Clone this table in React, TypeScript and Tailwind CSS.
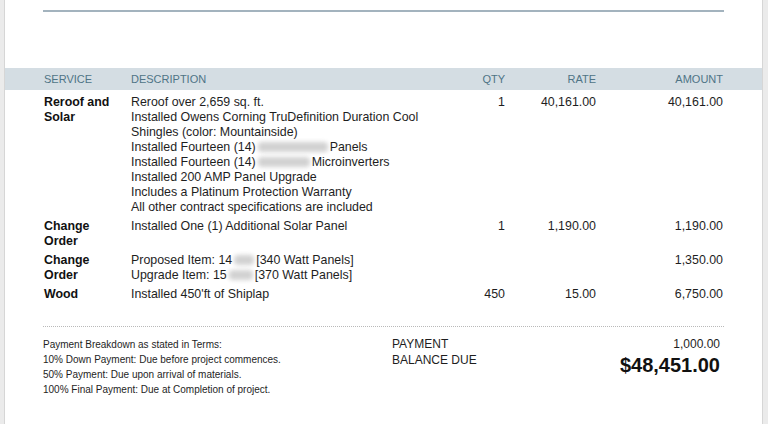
import React from "react";

interface LineItem {
  service: string[];
  description: React.ReactNode[];
  qty?: string;
  rate?: string;
  amount: string;
}

// redacted part of a line, shown as a soft grey smudge
const Smudge: React.FC<{ w: string }> = ({ w }) => (
  <span
    className={`mx-[2px] inline-block h-[10px] rounded-sm bg-[#d2d2d2] align-[-1px] blur-[2px] ${w}`}
  />
);

const items: LineItem[] = [
  {
    service: ["Reroof and", "Solar"],
    description: [
      "Reroof over 2,659 sq. ft.",
      "Installed Owens Corning TruDefinition Duration Cool",
      "Shingles (color: Mountainside)",
      <>
        Installed Fourteen (14)
        <Smudge w="w-[70px]" />
        Panels
      </>,
      <>
        Installed Fourteen (14)
        <Smudge w="w-[52px]" />
        Microinverters
      </>,
      "Installed 200 AMP Panel Upgrade",
      "Includes a Platinum Protection Warranty",
      "All other contract specifications are included",
    ],
    qty: "1",
    rate: "40,161.00",
    amount: "40,161.00",
  },
  {
    service: ["Change", "Order"],
    description: ["Installed One (1) Additional Solar Panel"],
    qty: "1",
    rate: "1,190.00",
    amount: "1,190.00",
  },
  {
    service: ["Change", "Order"],
    description: [
      <>
        Proposed Item: 14
        <Smudge w="w-[20px]" />
        [340 Watt Panels]
      </>,
      <>
        Upgrade Item: 15
        <Smudge w="w-[24px]" />
        [370 Watt Panels]
      </>,
    ],
    amount: "1,350.00",
  },
  {
    service: ["Wood"],
    description: ["Installed 450'ft of Shiplap"],
    qty: "450",
    rate: "15.00",
    amount: "6,750.00",
  },
];

const cols = "grid grid-cols-[87px_1fr_60px_91px_127px]";

export default function App() {
  return (
    <div className="flex h-[424px] w-[768px] overflow-hidden bg-[#ebebeb] font-['Liberation_Sans',Arial,sans-serif] text-[#1e1e1e]">
      <div className="ml-[4px] flex w-[759px] flex-col border-x border-[#d6d6d6] bg-white">
        {/* top rule */}
        <div className="px-[38px] pt-[10px]">
          <div className="h-[2px] bg-[#a3b3be]" />
        </div>

        {/* table header */}
        <div
          className={`${cols} mt-[56px] h-[22px] items-center bg-[#d4dde3] pl-[39px] pr-[39px] text-[11px] text-[#4f7486]`}
        >
          <span>SERVICE</span>
          <span>DESCRIPTION</span>
          <span className="text-right">QTY</span>
          <span className="text-right">RATE</span>
          <span className="text-right">AMOUNT</span>
        </div>

        {/* rows */}
        <div className="pt-[3px]">
          {items.map((item, i) => (
            <div
              key={i}
              className={`${cols} py-[2px] pl-[39px] pr-[39px] text-[12.4px] leading-[15px]`}
            >
              <div className="font-bold text-[#111]">
                {item.service.map((s, j) => (
                  <div key={j}>{s}</div>
                ))}
              </div>
              <div>
                {item.description.map((d, j) => (
                  <div key={j} className="whitespace-nowrap">
                    {d}
                  </div>
                ))}
              </div>
              <div className="text-right">{item.qty}</div>
              <div className="text-right">{item.rate}</div>
              <div className="text-right">{item.amount}</div>
            </div>
          ))}
        </div>

        {/* totals */}
        <div className="mx-[38px] mt-[22px] border-t border-dotted border-[#b9b9b9]">
          <div className="flex pt-[8px]">
            <div className="mt-[2px] w-[349px] text-[10px] leading-[15px]">
              <div>Payment Breakdown as stated in Terms:</div>
              <div>10% Down Payment: Due before project commences.</div>
              <div>50% Payment: Due upon arrival of materials.</div>
              <div>100% Final Payment: Due at Completion of project.</div>
            </div>
            <div className="flex-1 pr-[4px] text-[12px]">
              <div className="flex h-[17px] items-center justify-between">
                <span>PAYMENT</span>
                <span>1,000.00</span>
              </div>
              <div className="flex items-start justify-between">
                <span className="leading-[17px]">BALANCE DUE</span>
                <span className="text-[20px] font-bold leading-[27px] text-[#111]">
                  $48,451.00
                </span>
              </div>
            </div>
          </div>
        </div>
      </div>
    </div>
  );
}
